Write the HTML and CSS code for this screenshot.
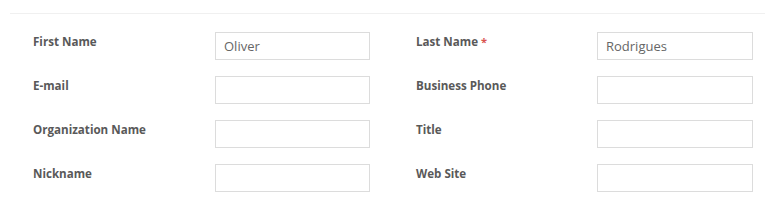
FILE: index.html
```html
<!DOCTYPE html>
<html lang="en">
<head>
    <meta charset="UTF-8">
    <title>Contact Details</title>
    <link rel="stylesheet" href="styles.css">
</head>
<body>
    <div class="divider"></div>

    <form class="contact-form">
        <label for="firstName">First Name</label>
        <input type="text" id="firstName" value="Oliver">
        <label for="lastName">Last Name <span class="required">*</span></label>
        <input type="text" id="lastName" value="Rodrigues">

        <label for="email">E-mail</label>
        <input type="text" id="email">
        <label for="phone">Business Phone</label>
        <input type="text" id="phone">

        <label for="org">Organization Name</label>
        <input type="text" id="org">
        <label for="title">Title</label>
        <input type="text" id="title">

        <label for="nickname">Nickname</label>
        <input type="text" id="nickname">
        <label for="website">Web Site</label>
        <input type="text" id="website">
    </form>
</body>
</html>
```

FILE: styles.css
```css
body {
    margin: 0;
    padding: 0;
    background-color: #fff;
    font-family: 'Open Sans', 'Liberation Sans', sans-serif;
}

.divider {
    height: 1px;
    margin: 13px 1px 0 10px;
    background-color: #f0f0f0;
}

.contact-form {
    display: grid;
    grid-template-columns: 182px 155px 227px 156px;
    grid-auto-rows: 28px;
    row-gap: 16px;
    padding: 18px 0 0 33px;
}

.contact-form label {
    font-size: 11.6px;
    font-weight: bold;
    color: #595959;
    line-height: 16px;
    padding-top: 2px;
}

.contact-form label:nth-of-type(even) {
    padding-left: 46px;
}

.contact-form input {
    box-sizing: border-box;
    height: 28px;
    margin: 0;
    padding: 0 8px;
    border: 1px solid #dcdcdc;
    border-radius: 0;
    font-family: inherit;
    font-size: 13px;
    color: #666;
    outline: none;
}

.required {
    color: #d9534f;
    font-size: 11px;
}
```
